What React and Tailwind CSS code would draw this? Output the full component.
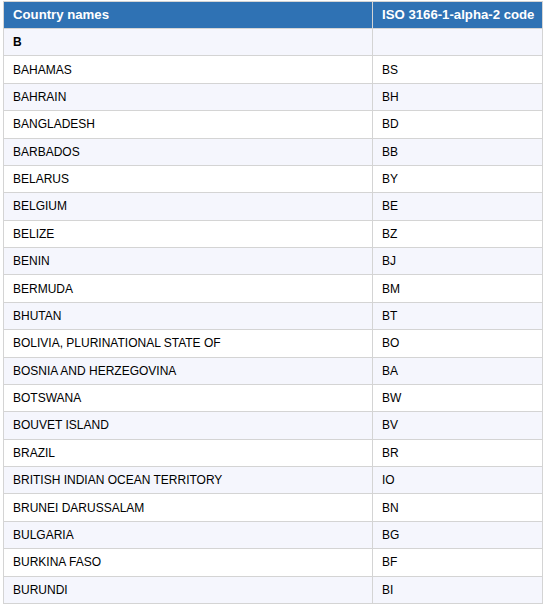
const rows = [
  ['BAHAMAS', 'BS'],
  ['BAHRAIN', 'BH'],
  ['BANGLADESH', 'BD'],
  ['BARBADOS', 'BB'],
  ['BELARUS', 'BY'],
  ['BELGIUM', 'BE'],
  ['BELIZE', 'BZ'],
  ['BENIN', 'BJ'],
  ['BERMUDA', 'BM'],
  ['BHUTAN', 'BT'],
  ['BOLIVIA, PLURINATIONAL STATE OF', 'BO'],
  ['BOSNIA AND HERZEGOVINA', 'BA'],
  ['BOTSWANA', 'BW'],
  ['BOUVET ISLAND', 'BV'],
  ['BRAZIL', 'BR'],
  ['BRITISH INDIAN OCEAN TERRITORY', 'IO'],
  ['BRUNEI DARUSSALAM', 'BN'],
  ['BULGARIA', 'BG'],
  ['BURKINA FASO', 'BF'],
  ['BURUNDI', 'BI'],
];

export default function App() {
  return (
    <div className="bg-white pt-px pl-[3px] w-[544px] h-[609px] font-['Liberation_Sans',Arial,sans-serif]">
      <table className="w-[540px] table-fixed border-collapse text-[12px] text-black">
        <thead>
          <tr className="h-[27px] bg-[#2f72b4] text-white text-[13.2px] font-bold whitespace-nowrap">
            <th className="w-[369px] border border-[#d4d4d4] px-[9px] text-left">Country names</th>
            <th className="border border-[#d4d4d4] pl-[9px] pr-0 text-left">ISO 3166-1-alpha-2 code</th>
          </tr>
        </thead>
        <tbody>
          <tr className="h-[27.38px] bg-[#f5f6fd] font-bold">
            <td className="border border-[#d4d4d4] px-[9px]">B</td>
            <td className="border border-[#d4d4d4] px-[9px]"></td>
          </tr>
          {rows.map(([name, code], i) => (
            <tr key={code} className={i % 2 === 0 ? 'h-[27.38px] bg-white' : 'h-[27.38px] bg-[#f5f6fd]'}>
              <td className="border border-[#d4d4d4] px-[9px]">{name}</td>
              <td className="border border-[#d4d4d4] px-[9px]">{code}</td>
            </tr>
          ))}
        </tbody>
      </table>
    </div>
  );
}
